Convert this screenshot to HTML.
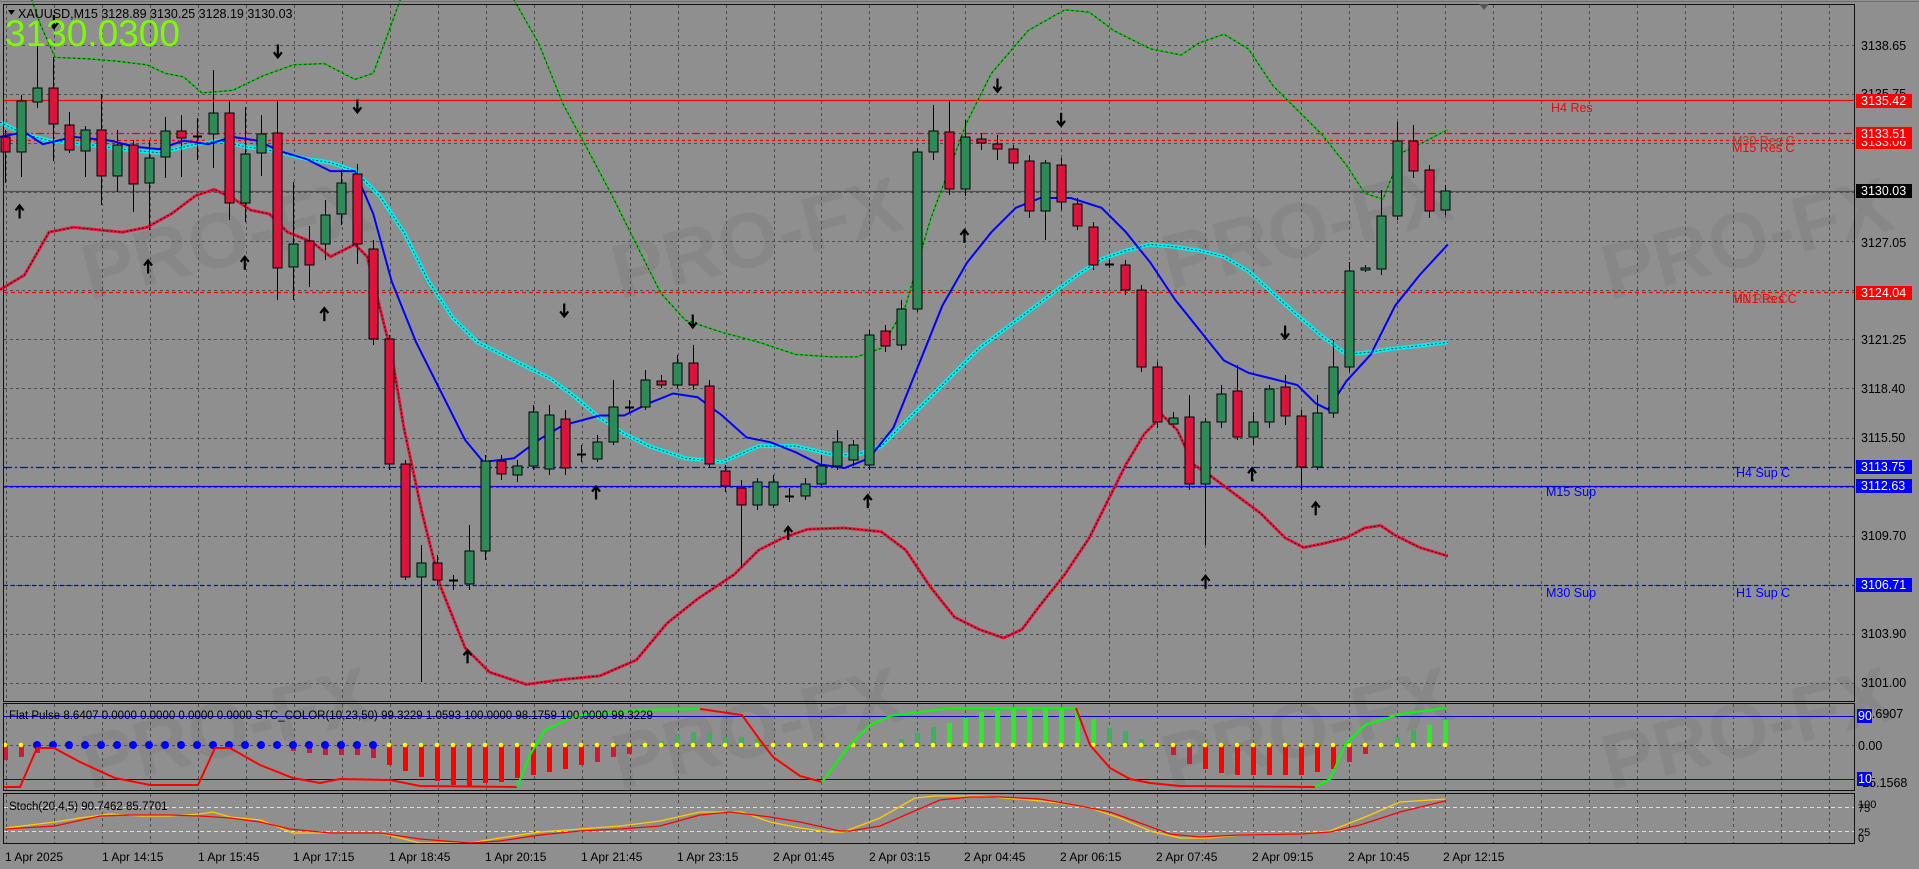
<!DOCTYPE html>
<html><head><meta charset="utf-8">
<style>
html,body{margin:0;padding:0;background:#8f8f8f;width:1919px;height:869px;overflow:hidden;font-family:"Liberation Sans",sans-serif}
svg{position:absolute;left:0;top:0}
</style></head><body>
<svg id="s" width="1919" height="869" viewBox="0 0 1919 869" xmlns="http://www.w3.org/2000/svg" font-family="Liberation Sans, sans-serif">
<rect x="0" y="0" width="1919" height="869" fill="#8f8f8f"/>
<g fill="#878787" font-weight="bold" font-size="78">
<text x="90" y="300" transform="rotate(-14 90 300)">PRO-FX</text>
<text x="620" y="300" transform="rotate(-14 620 300)">PRO-FX</text>
<text x="1170" y="290" transform="rotate(-14 1170 290)">PRO-FX</text>
<text x="1610" y="300" transform="rotate(-14 1610 300)">PRO-FX</text>
<text x="90" y="790" transform="rotate(-14 90 790)">PRO-FX</text>
<text x="620" y="790" transform="rotate(-14 620 790)">PRO-FX</text>
<text x="1170" y="790" transform="rotate(-14 1170 790)">PRO-FX</text>
<text x="1610" y="790" transform="rotate(-14 1610 790)">PRO-FX</text>
</g>
<g id="grid"></g>
<g id="hl"></g>
<g id="lines"></g>
<g id="candles"></g>
<g id="arrows"></g>
<g id="ind"></g>
<!-- frames -->
<line x1="0" y1="1.5" x2="1919" y2="1.5" stroke="#6e6e6e" stroke-width="1"/>
<rect x="3.5" y="4.5" width="1851" height="697" fill="none" stroke="#111" stroke-width="1"/>
<rect x="3.5" y="703.5" width="1851" height="87" fill="none" stroke="#111" stroke-width="1"/>
<rect x="3.5" y="793.5" width="1851" height="50" fill="none" stroke="#111" stroke-width="1"/>
<path d="M1479 4 L1489 4 L1484 10 Z" fill="#555"/>
<!-- header -->
<path d="M8 10 L15 10 L11.5 15 Z" fill="#000"/>
<text x="18" y="18" font-size="12.5" fill="#000">XAUUSD,M15  3128.89 3130.25 3128.19 3130.03</text>
<text x="5" y="46" font-size="37" fill="#7cfc00">3130.0300</text>
<!-- line labels -->
<g font-size="12.5">
<text x="1551" y="112" fill="#ff0000">H4 Res</text>
<text x="1732" y="145" fill="#b04020">M30 Res C</text>
<text x="1732" y="152" fill="#ff0000">M15 Res C</text>
<text x="1732" y="303" fill="#ff0000">MN1 Res C</text>
<text x="1734" y="303" fill="#d01010" opacity="0.6">H1 Res C</text>
<text x="1736" y="477" fill="#0000ff">H4 Sup C</text>
<text x="1546" y="496" fill="#0000ff">M15 Sup</text>
<text x="1546" y="597" fill="#0000ff">M30 Sup</text>
<text x="1736" y="597" fill="#0000ff">H1 Sup C</text>
</g>
<!-- price axis -->
<g font-size="12.5" fill="#000">
<text x="1861" y="50">3138.65</text>
<text x="1861" y="98">3135.75</text>
<text x="1861" y="247">3127.05</text>
<text x="1861" y="344">3121.25</text>
<text x="1861" y="393">3118.40</text>
<text x="1861" y="442">3115.50</text>
<text x="1861" y="540">3109.70</text>
<text x="1861" y="638">3103.90</text>
<text x="1861" y="687">3101.00</text>
</g>
<g font-size="12.5">
<rect x="1856" y="94" width="56" height="14" fill="#ff0000"/><text x="1861" y="105" fill="#fff">3135.42</text>
<rect x="1856" y="135" width="56" height="14" fill="#ff0000"/><text x="1861" y="146" fill="#fff">3133.06</text>
<rect x="1856" y="127" width="56" height="14" fill="#ff0000"/><text x="1861" y="138" fill="#fff">3133.51</text>
<rect x="1856" y="184" width="56" height="14" fill="#000"/><text x="1861" y="195" fill="#fff">3130.03</text>
<rect x="1856" y="286" width="56" height="14" fill="#ff0000"/><text x="1861" y="297" fill="#fff">3124.04</text>
<rect x="1856" y="460" width="56" height="14" fill="#0000ff"/><text x="1861" y="471" fill="#fff">3113.75</text>
<rect x="1856" y="479" width="56" height="14" fill="#0000ff"/><text x="1861" y="490" fill="#fff">3112.63</text>
<rect x="1856" y="578" width="56" height="14" fill="#0000ff"/><text x="1861" y="589" fill="#fff">3106.71</text>
<text x="1858" y="718" fill="#000">16.6907</text>
<rect x="1857" y="709" width="15" height="14" fill="#0000ff"/><text x="1858" y="720" fill="#fff">90</text>
<text x="1858" y="750" fill="#000">0.00</text>
<text x="1858" y="787" fill="#000">-15.1568</text>
<rect x="1857" y="772" width="15" height="14" fill="#0000ff"/><text x="1858" y="783" fill="#fff">10</text>
<text x="1858" y="808" fill="#000" font-size="11">100</text>
<text x="1858" y="812" fill="#000" font-size="11">75</text>
<text x="1858" y="836" fill="#000" font-size="11">25</text>
<text x="1858" y="842" fill="#000" font-size="11">0</text>
</g>
<text x="9" y="719" font-size="11.5" fill="#000">Flat Pulse 8.6407 0.0000 0.0000 0.0000 0.0000  STC_COLOR(10,23,50) 99.3229 1.0593 100.0000 98.1759 100.0000 99.3229</text>
<text x="9" y="810" font-size="11.5" fill="#000">Stoch(20,4,5) 90.7462 85.7701</text>
<g font-size="12" fill="#000">
<text x="5" y="861">1 Apr 2025</text>
<text x="102" y="861">1 Apr 14:15</text>
<text x="198" y="861">1 Apr 15:45</text>
<text x="293" y="861">1 Apr 17:15</text>
<text x="389" y="861">1 Apr 18:45</text>
<text x="485" y="861">1 Apr 20:15</text>
<text x="581" y="861">1 Apr 21:45</text>
<text x="677" y="861">1 Apr 23:15</text>
<text x="773" y="861">2 Apr 01:45</text>
<text x="869" y="861">2 Apr 03:15</text>
<text x="964" y="861">2 Apr 04:45</text>
<text x="1060" y="861">2 Apr 06:15</text>
<text x="1156" y="861">2 Apr 07:45</text>
<text x="1252" y="861">2 Apr 09:15</text>
<text x="1348" y="861">2 Apr 10:45</text>
<text x="1443" y="861">2 Apr 12:15</text>
</g>
</svg>
<script>
var NS="http://www.w3.org/2000/svg";
function el(p,t,a){var e=document.createElementNS(NS,t);for(var k in a)e.setAttribute(k,a[k]);document.getElementById(p).appendChild(e);return e;}
// grid
var gy=[45,94,143,192,241,290,339,388,438,487,536,585,634,683];
gy.forEach(function(y){el("grid","line",{x1:4,x2:1854,y1:y+.5,y2:y+.5,stroke:"#4e4e4e","stroke-dasharray":"3,3"});});
for(var k=0;k<39;k++){var x=Math.round(6+47.97*k)+.5;
 el("grid","line",{x1:x,x2:x,y1:5,y2:701,stroke:"#4e4e4e","stroke-dasharray":"3,3"});
 el("grid","line",{x1:x,x2:x,y1:704,y2:790,stroke:"#4e4e4e","stroke-dasharray":"3,3"});
 el("grid","line",{x1:x,x2:x,y1:794,y2:843,stroke:"#4e4e4e","stroke-dasharray":"3,3"});}
el("grid","line",{x1:4,x2:1854,y1:745.5,y2:745.5,stroke:"#4e4e4e","stroke-dasharray":"3,3"});
el("grid","line",{x1:4,x2:1854,y1:807.5,y2:807.5,stroke:"#e0e0e0","stroke-dasharray":"4,3"});
el("grid","line",{x1:4,x2:1854,y1:831.5,y2:831.5,stroke:"#e0e0e0","stroke-dasharray":"4,3"});
el("grid","line",{x1:4,x2:1854,y1:716.5,y2:716.5,stroke:"#0000cc"});
el("grid","line",{x1:4,x2:1854,y1:779.5,y2:779.5,stroke:"#0000cc"});
// horizontal level lines
[[100.5,"#ff0000",""],[133.5,"#ff0000","8,3,2,3"],[140.5,"#ff0000","3,3"],[191.5,"#505050",""],[292.5,"#ff0000","4,3"],[467.5,"#0000ff","8,3,2,3"],[486.5,"#0000ff",""],[585.5,"#0000ff","4,3"]].forEach(function(h){
 var a={x1:4,x2:1854,y1:h[0],y2:h[0],stroke:h[1],"stroke-width":1.2};if(h[2])a["stroke-dasharray"]=h[2];el("hl","line",a);});
// lines in preview coords
function P(arr){return arr.map(function(p){return (p[0]*1.2239).toFixed(1)+","+(p[1]*1.2222).toFixed(1);}).join(" ");}
var green=[[26,0],[33,20],[45,47],[70,48],[95,50],[120,53],[135,60],[150,63],[165,76],[190,74],[215,62],[240,53],[265,52],[290,65],[305,60],[315,33],[327,0]];
var green2=[[420,0],[440,35],[460,85],[480,122],[500,160],[520,200],[540,240],[560,262],[590,272],[620,280],[650,290],[680,292],[700,292],[720,285],[740,250],[760,180],[790,100],[810,60],[840,25],[870,8],[890,10],[910,25],[940,40],[965,45],[980,35],[1000,28],[1020,40],[1040,70],[1060,90],[1080,110],[1100,135],[1115,158],[1130,163],[1145,125],[1160,118],[1183,106]];
var red=[[0,237],[20,225],[40,190],[60,186],[80,188],[100,190],[120,186],[140,175],[160,160],[175,155],[190,162],[205,172],[220,175],[235,190],[255,198],[270,210],[290,200],[300,210],[310,250],[320,290],[330,350],[345,420],[360,480],[380,530],[400,550],[430,560],[460,556],[490,553],[520,540],[545,510],[570,490],[600,470],[620,450],[640,440],[660,433],[690,432],[720,435],[740,450],[760,480],[780,505],[800,515],[820,522],[835,515],[850,495],[870,470],[890,440],[905,410],[920,380],[935,355],[950,340],[962,352],[975,380],[990,390],[1010,405],[1030,420],[1050,440],[1065,448],[1080,445],[1100,440],[1115,432],[1128,430],[1140,438],[1160,448],[1183,455]];
var blue=[[0,112],[20,108],[35,118],[60,112],[90,115],[110,120],[130,122],[150,115],[170,118],[190,112],[210,115],[230,124],[250,130],[270,140],[290,140],[305,175],[320,230],[340,280],[360,320],[380,360],[395,378],[420,375],[440,360],[460,348],[490,340],[510,340],[530,330],[550,322],[570,325],[590,340],[610,358],[630,362],[650,370],[670,380],[690,383],[710,375],[730,350],[750,300],[770,250],[790,215],[810,190],[830,170],[850,162],[875,162],[900,170],[920,190],[940,215],[960,245],[980,270],[1000,295],[1020,305],[1040,310],[1060,315],[1075,330],[1085,335],[1100,312],[1120,290],[1140,250],[1160,225],[1183,200]];
var cyan=[[0,100],[20,110],[40,115],[70,118],[100,122],[130,125],[160,118],[180,115],[200,120],[215,122],[230,125],[250,130],[270,133],[290,140],[310,160],[330,190],[350,230],[370,260],[390,280],[410,290],[430,300],[450,310],[470,325],[490,342],[510,355],[530,365],[560,375],[590,378],[620,365],[650,365],[680,372],[700,372],[720,365],[740,345],[760,325],[780,305],[800,285],[820,270],[840,255],[860,240],[880,225],[900,212],[920,205],[940,200],[960,202],[980,205],[1000,210],[1020,222],[1040,240],[1060,258],[1080,275],[1100,290],[1120,288],[1140,285],[1160,283],[1183,280]];
[green,green2].forEach(function(g){el("lines","polyline",{points:P(g),fill:"none",stroke:"#10c010","stroke-width":1.6});el("lines","polyline",{points:P(g),fill:"none",stroke:"#0a3a0a","stroke-width":1,"stroke-dasharray":"2,3"});});
el("lines","polyline",{points:P(red),fill:"none",stroke:"#e8163c","stroke-width":3});
el("lines","polyline",{points:P(red),fill:"none",stroke:"#3a0a0a","stroke-width":1,"stroke-dasharray":"2,2"});
el("lines","polyline",{points:P(cyan),fill:"none",stroke:"#00f0f0","stroke-width":4});
el("lines","polyline",{points:P(cyan),fill:"none",stroke:"#1a3a3a","stroke-width":1,"stroke-dasharray":"2,2"});
el("lines","polyline",{points:P(blue),fill:"none",stroke:"#0000ff","stroke-width":2});
// candles [o,c,h,l] real y
var C=[[137,152,130,183],[152,101,95,177],[102,88,40,108],[88,124,57,161],[125,150,112,153],[151,130,126,177],[130,176,94,205],[176,145,130,192],[145,184,140,212],[183,158,140,230],[157,131,117,178],[131,138,115,177],[137,136,118,160],[134,113,70,168],[113,203,100,220],[203,154,107,222],[153,134,115,176],[133,268,100,300],[267,244,182,300],
[241,265,226,287],[244,215,200,260],[214,183,170,225],[174,244,164,264],[249,339,240,345],[339,464,335,470],[464,577,460,580],[577,563,545,682],[563,580,555,585],[580,581,575,590],[584,551,525,590],[551,461,455,560],[461,474,455,480],[475,466,460,482],[466,412,405,470],[469,415,405,475],[419,468,410,475],[455,454,445,462],[459,442,435,462],[442,407,380,445],[408,407,400,412],[407,380,370,410],[381,385,375,388],[385,363,355,388],[363,385,345,390],[386,464,380,468],[471,486,465,492],[488,505,480,568],[505,482,478,510],[505,482,475,508],[496,496,488,502],[496,484,478,500],[484,466,455,488],[466,442,430,470],[460,445,440,466],[465,335,330,470],[331,346,325,352],[345,309,300,350],[309,152,148,312],[152,131,105,160],[132,189,100,195],[189,137,120,196],[139,143,133,150],[144,149,135,160],[149,163,145,170],[161,211,155,218],[211,163,160,240],[165,202,158,210],[204,226,198,230],[227,265,222,270],[265,264,258,268],[265,290,260,295],[290,367,285,372],[367,422,362,428],[424,418,412,428],[417,484,395,490],[484,422,418,545],[422,394,385,428],[391,437,365,440],[437,422,412,445],[422,389,385,428],[387,416,375,425],[416,467,410,490],[467,413,395,470],[413,367,340,418],[367,271,262,372],[270,268,265,272],[269,216,190,275],[216,141,122,220],[141,171,125,178],[170,211,165,218],[210,191,185,215]];
C.forEach(function(c,i){var x=5+16*i;
 el("candles","line",{x1:x+.5,x2:x+.5,y1:c[2],y2:c[3],stroke:"#000","stroke-width":1});
 var t=Math.min(c[0],c[1]),b=Math.max(c[0],c[1]);
 if(b-t<2){el("candles","line",{x1:x-4,x2:x+5,y1:t+.5,y2:t+.5,stroke:"#000","stroke-width":2});}
 else el("candles","rect",{x:x-4,y:t,width:9,height:b-t,fill:c[1]<c[0]?"#2e8b57":"#dc143c",stroke:"#000","stroke-width":1});
});
// arrows (preview coords)
function arrow(px,py,down){var x=px*1.2239,y=py*1.2222;
 var d=down?"M"+x+" "+(y-7)+" V"+(y+5)+" M"+(x-4)+" "+(y+1)+" L"+x+" "+(y+6)+" L"+(x+4)+" "+(y+1)
 :"M"+x+" "+(y+7)+" V"+(y-5)+" M"+(x-4)+" "+(y-1)+" L"+x+" "+(y-6)+" L"+(x+4)+" "+(y-1);
 el("arrows","path",{d:d,fill:"none",stroke:"#000","stroke-width":2.2});}
[[44,18],[227,42],[292,87],[461,254],[566,263],[815,70],[867,98],[1050,272]].forEach(function(a){arrow(a[0],a[1],true);});
[[16,173],[121,218],[200,215],[265,257],[382,537],[487,403],[644,436],[709,410],[788,193],[985,476],[1023,388],[1075,416]].forEach(function(a){arrow(a[0],a[1],false);});
// histogram
var H=[-15,-12,-8,0,-4,0,0,0,0,0,0,0,0,0,0,0,0,-3,-6,-8,-10,-10,-10,-13,-20,-26,-32,-36,-40,-42,-38,-37,-33,-30,-27,-24,-20,-17,-12,-9,0,4,10,13,12,8,8,6,0,0,0,0,0,0,0,0,6,12,18,22,27,33,35,37,37,37,37,35,26,17,14,6,0,-10,-19,-24,-28,-30,-30,-30,-30,-30,-27,-24,-17,-9,0,8,15,20,25];
H.forEach(function(v,i){var x=5+16*i;if(v){
 var strong=Math.abs(v)>=20;
 el("ind","rect",{x:x-2,y:v>0?745-v:745,width:5,height:Math.abs(v),fill:v>0?(strong?"#2ee82e":"#3cb060"):(strong?"#ff0000":"#d01838")});}
 if(i>=2&&i<=23)el("ind","circle",{cx:x,cy:745,r:4,fill:"#0000ff"});
 else el("ind","circle",{cx:x,cy:745,r:2.3,fill:"#ffff00"});
});
function poly(pts,col,w){el("ind","polyline",{points:pts.map(function(p){return p[0]+","+p[1];}).join(" "),fill:"none",stroke:col,"stroke-width":w});}
poly([[4,787],[20,787],[37,748],[54,748],[80,762],[115,778],[150,785],[198,785],[215,748],[230,748],[260,765],[293,778],[320,783],[340,779],[390,780],[420,786],[517,787]],"#ff0000",2);
poly([[517,787],[530,755],[545,730],[575,716],[640,710],[700,709]],"#00ff00",2);
poly([[700,709],[742,715],[760,740],[773,757],[800,776],[822,782]],"#ff0000",2);
poly([[822,782],[850,745],[870,725],[890,716],[920,712],[950,708],[1076,708]],"#00ff00",2);
poly([[1076,708],[1090,745],[1110,768],[1130,779],[1150,783],[1180,786],[1315,787]],"#ff0000",2);
poly([[1315,787],[1330,779],[1345,745],[1365,725],[1400,714],[1445,708]],"#00ff00",2);
poly([[5,828],[55,822],[80,818],[110,814],[140,816],[170,816],[200,814],[213,812],[230,817],[260,820],[293,833],[330,833],[380,833],[420,843],[470,843],[500,838],[540,832],[580,829],[620,826],[660,821],[700,812],[742,812],[770,822],[800,828],[830,832],[843,832],[880,818],[915,798],[935,796],[980,796],[1030,800],[1060,803],[1090,808],[1120,818],[1150,831],[1180,838],[1210,838],[1240,835],[1300,834],[1330,831],[1370,815],[1400,802],[1445,799]],"#ffcc00",1.3);
poly([[5,829],[55,826],[100,816],[130,815],[170,815],[200,816],[230,818],[260,822],[290,829],[330,833],[380,833],[420,839],[470,843],[500,841],[540,835],[580,831],[620,829],[660,826],[700,815],[730,812],[770,817],[800,822],[840,831],[850,831],[880,826],[910,813],[940,800],[970,797],[1000,797],[1040,799],[1080,806],[1110,812],[1140,823],[1170,834],[1200,837],[1240,835],[1300,834],[1330,832],[1360,825],[1400,812],[1445,801]],"#ff0000",1.3);
</script>
</body></html>
